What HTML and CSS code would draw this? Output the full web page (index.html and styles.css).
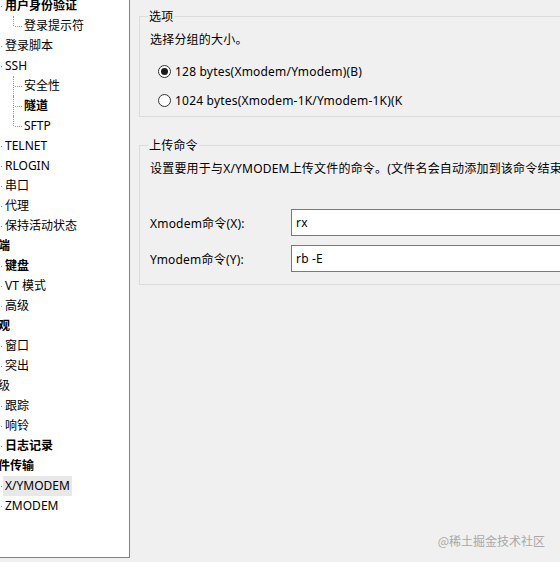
FILE: index.html
```html
<!DOCTYPE html>
<html lang="zh-CN">
<head>
    <meta charset="UTF-8">
    <meta name="viewport" content="width=device-width, initial-scale=1.0">
    <title>X/YMODEM</title>
    <link rel="stylesheet" href="styles.css">
</head>
<body>
    <div class="window">
        <div class="tree">
            <ul>
                <li class="lv1 bold">用户身份验证</li>
                <li class="lv2 last">登录提示符</li>
                <li class="lv1">登录脚本</li>
                <li class="lv1">SSH</li>
                <li class="lv2">安全性</li>
                <li class="lv2 bold">隧道</li>
                <li class="lv2 last">SFTP</li>
                <li class="lv1">TELNET</li>
                <li class="lv1">RLOGIN</li>
                <li class="lv1">串口</li>
                <li class="lv1">代理</li>
                <li class="lv1">保持活动状态</li>
                <li class="lv0 bold">终端</li>
                <li class="lv1 bold">键盘</li>
                <li class="lv1">VT 模式</li>
                <li class="lv1">高级</li>
                <li class="lv0 bold">外观</li>
                <li class="lv1">窗口</li>
                <li class="lv1">突出</li>
                <li class="lv0">高级</li>
                <li class="lv1">跟踪</li>
                <li class="lv1">响铃</li>
                <li class="lv1 bold">日志记录</li>
                <li class="lv0 bold">文件传输</li>
                <li class="lv1"><span class="selected">X/YMODEM</span></li>
                <li class="lv1">ZMODEM</li>
            </ul>
        </div>
        <div class="pane">
            <fieldset class="group group-options">
                <legend>选项</legend>
                <p class="hint">选择分组的大小。</p>
                <label class="radio first">
                    <span class="radio-circle checked"></span>
                    <span class="radio-text">128 bytes(Xmodem/Ymodem)(B)</span>
                </label>
                <label class="radio">
                    <span class="radio-circle"></span>
                    <span class="radio-text clip">1024 bytes(Xmodem-1K/Ymodem-1K)(K)</span>
                </label>
            </fieldset>
            <fieldset class="group group-upload">
                <legend>上传命令</legend>
                <p class="hint">设置要用于与X/YMODEM上传文件的命令。(文件名会自动添加到该命令结束处)</p>
                <div class="field first">
                    <label for="xcmd">Xmodem命令(X):</label>
                    <input type="text" id="xcmd" value="rx">
                </div>
                <div class="field">
                    <label for="ycmd">Ymodem命令(Y):</label>
                    <input type="text" id="ycmd" value="rb -E">
                </div>
            </fieldset>
        </div>
        <div class="watermark">@稀土掘金技术社区</div>
    </div>
</body>
</html>
```

FILE: styles.css
```css
body {
    margin: 0;
    padding: 0;
    background-color: #f0f0f0;
    font-family: "Noto Sans", "Noto Sans CJK SC", sans-serif;
    font-size: 12px;
    color: #000;
    overflow: hidden;
}
.window {
    position: relative;
    display: flex;
    width: 560px;
    height: 562px;
    overflow: hidden;
}
/* 左侧树 */
.tree {
    flex: none;
    width: 129px;
    height: 557px;
    background-color: #fff;
    border-right: 1px solid #828282;
    border-bottom: 1px solid #828282;
    overflow: hidden;
}
.tree ul {
    list-style: none;
    margin: -4px 0 0 0;
    padding: 0;
}
.tree li {
    position: relative;
    height: 20px;
    line-height: 20px;
    white-space: nowrap;
}
.tree .bold {
    font-weight: bold;
}
.lv0 {
    padding-left: 0;
    margin-left: -14px;
}
.lv1 {
    padding-left: 5px;
}
.lv1::before {
    content: "";
    position: absolute;
    left: 1px;
    top: 10px;
    width: 1px;
    height: 1px;
    background-color: #8c8c8c;
}
.lv2 {
    padding-left: 24px;
}
.lv2::before {
    content: "";
    position: absolute;
    left: 13px;
    top: 0;
    height: 20px;
    border-left: 1px dotted #9a9a9a;
}
.lv2.last::before {
    height: 10px;
}
.lv2::after {
    content: "";
    position: absolute;
    left: 15px;
    top: 10px;
    width: 7px;
    border-top: 1px dotted #9a9a9a;
}
.selected {
    display: inline-block;
    margin-left: -2px;
    padding: 0 2px;
    background-color: #e8e8e8;
}
/* 右侧面板 */
.pane {
    flex: 1;
    min-width: 0;
    padding: 8px 0 0 9px;
    overflow: hidden;
    letter-spacing: 0.2px;
}
.group {
    width: 500px;
    margin: 0;
    padding: 0 0 6px 10px;
    border: 1px solid #dcdcdc;
    border-radius: 0;
}
.group legend {
    margin-left: -2px;
    padding: 0 1px;
    line-height: 17px;
}
.hint {
    margin: 7px 0 0 0;
    line-height: 16px;
    white-space: nowrap;
}
.radio {
    display: flex;
    align-items: center;
    height: 20px;
    margin-top: 9px;
    padding-left: 8px;
}
.radio.first {
    margin-top: 13px;
}
.radio-circle {
    flex: none;
    position: relative;
    width: 11px;
    height: 11px;
    margin-right: 4px;
    border: 1px solid #333;
    border-radius: 50%;
    background-color: #fff;
}
.radio-circle.checked::after {
    content: "";
    position: absolute;
    left: 2px;
    top: 2px;
    width: 7px;
    height: 7px;
    border-radius: 50%;
    background-color: #1a1a1a;
}
.radio-text {
    white-space: nowrap;
}
.radio-text.clip {
    display: inline-block;
    width: 228px;
    overflow: hidden;
}
.group-upload {
    margin-top: 20px;
    padding-bottom: 12px;
}
.field {
    display: flex;
    align-items: center;
    margin-top: 9px;
}
.field.first {
    margin-top: 32px;
}
.field label {
    flex: none;
    width: 141px;
    white-space: nowrap;
}
.field input {
    flex: 1;
    box-sizing: border-box;
    height: 27px;
    margin: 0;
    padding: 0 4px;
    border: 1px solid #7a7a7a;
    border-radius: 0;
    background-color: #fff;
    font-family: inherit;
    font-size: 12px;
    letter-spacing: 0.2px;
    color: #000;
    outline: none;
}
/* 水印 */
.watermark {
    position: absolute;
    right: 15px;
    bottom: 13px;
    color: #a8a8a8;
    font-family: "Noto Sans CJK SC", sans-serif;
    font-size: 12px;
    line-height: 16px;
}
```
